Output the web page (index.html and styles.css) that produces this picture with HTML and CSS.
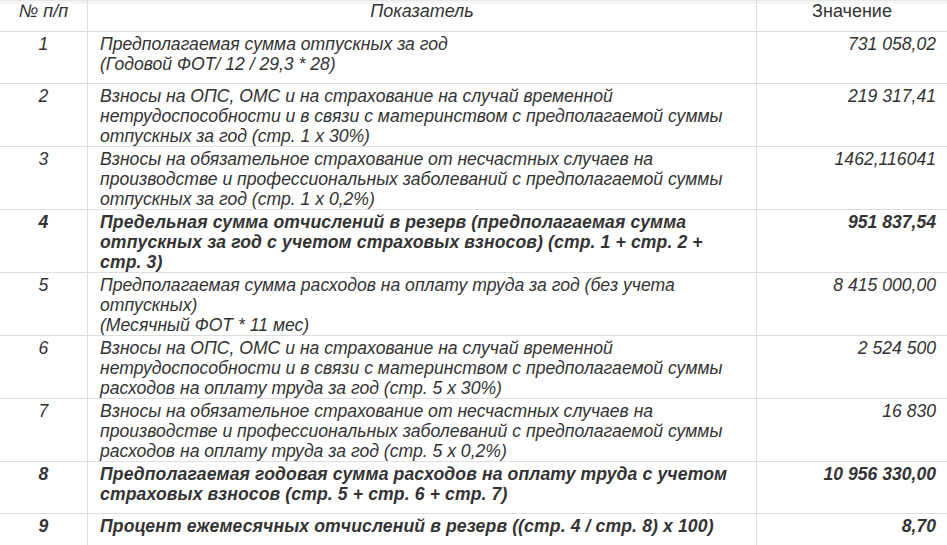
FILE: index.html
```html
<!DOCTYPE html>
<html lang="ru">
<head>
<meta charset="utf-8">
<title>Расчет резерва отпусков</title>
<link rel="stylesheet" href="styles.css">
</head>
<body>
<table class="calc">
  <colgroup>
    <col class="c-num">
    <col class="c-name">
    <col class="c-val">
  </colgroup>
  <thead>
    <tr>
      <th class="num it">№ п/п</th>
      <th class="name it">Показатель</th>
      <th class="val">Значение</th>
    </tr>
  </thead>
  <tbody>
    <tr>
      <td class="num">1</td>
      <td class="name">Предполагаемая сумма отпускных за год<br>(Годовой ФОТ/ 12 / 29,3 * 28)</td>
      <td class="val">731 058,02</td>
    </tr>
    <tr>
      <td class="num">2</td>
      <td class="name">Взносы на ОПС, ОМС и на страхование на случай временной нетрудоспособности и в связи с материнством с предполагаемой суммы отпускных за год (стр. 1 х 30%)</td>
      <td class="val">219 317,41</td>
    </tr>
    <tr>
      <td class="num">3</td>
      <td class="name">Взносы на обязательное страхование от несчастных случаев на производстве и профессиональных заболеваний с предполагаемой суммы отпускных за год (стр. 1 х 0,2%)</td>
      <td class="val">1462,116041</td>
    </tr>
    <tr class="bold">
      <td class="num">4</td>
      <td class="name">Предельная сумма отчислений в резерв (предполагаемая сумма отпускных за год с учетом страховых взносов) (стр. 1 + стр. 2 + стр.&nbsp;3)</td>
      <td class="val">951 837,54</td>
    </tr>
    <tr>
      <td class="num">5</td>
      <td class="name">Предполагаемая сумма расходов на оплату труда за год (без учета отпускных)<br>(Месячный ФОТ * 11 мес)</td>
      <td class="val">8 415 000,00</td>
    </tr>
    <tr>
      <td class="num">6</td>
      <td class="name">Взносы на ОПС, ОМС и на страхование на случай временной нетрудоспособности и в связи с материнством с предполагаемой суммы расходов на оплату труда за год (стр. 5 х 30%)</td>
      <td class="val">2 524 500</td>
    </tr>
    <tr>
      <td class="num">7</td>
      <td class="name">Взносы на обязательное страхование от несчастных случаев на производстве и профессиональных заболеваний с предполагаемой суммы расходов на оплату труда за год (стр. 5 х 0,2%)</td>
      <td class="val">16 830</td>
    </tr>
    <tr class="bold">
      <td class="num">8</td>
      <td class="name">Предполагаемая годовая сумма расходов на оплату труда с учетом страховых взносов (стр. 5 + стр. 6 + стр. 7)</td>
      <td class="val">10 956 330,00</td>
    </tr>
    <tr class="bold">
      <td class="num">9</td>
      <td class="name">Процент ежемесячных отчислений в резерв ((стр. 4 / стр. 8) х 100)</td>
      <td class="val">8,70</td>
    </tr>
  </tbody>
</table>
</body>
</html>
```

FILE: styles.css
```css
html, body {
  margin: 0;
  padding: 0;
  background: #ffffff;
}

body {
  font-family: "Liberation Sans", Arial, sans-serif;
  font-size: 17.6px;
  color: #333333;
  overflow: hidden;
}

.calc {
  border-collapse: collapse;
  table-layout: fixed;
  width: 948px;
  margin-left: -1px;
}

.c-num { width: 88px; }
.c-name { width: 669px; }
.c-val { width: 191px; }

.calc th,
.calc td {
  border: 1px solid #dedede;
  vertical-align: top;
  line-height: 20px;
}

.calc thead th {
  font-weight: normal;
  font-size: 18px;
  line-height: 21px;
  padding: 0 6px 9px;
  height: 21px;
  text-align: center;
  border-top-color: #e8e8e8;
  background: linear-gradient(#ececec, #ffffff 3px);
}

.calc th.it { font-style: italic; }

.calc td {
  font-style: italic;
  padding: 2px 10px 0 12px;
  height: 49px;
}

.calc td.num {
  text-align: center;
  padding-left: 0;
  padding-right: 0;
}

.calc td.val {
  text-align: right;
  padding-right: 11px;
}

.calc tr.bold td {
  font-weight: bold;
}

.calc tr.bold td.name {
  letter-spacing: 0.12px;
}
```
